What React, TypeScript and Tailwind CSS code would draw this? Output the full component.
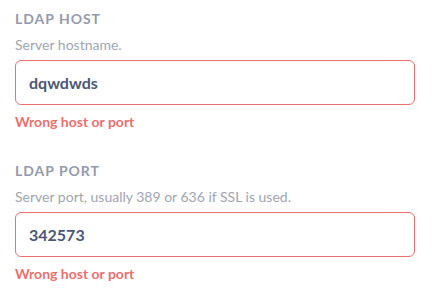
export default function App() {
  const fields = [
    { label: "LDAP HOST", desc: "Server hostname.", value: "dqwdwds" },
    {
      label: "LDAP PORT",
      desc: "Server port, usually 389 or 636 if SSL is used.",
      value: "342573",
    },
  ];
  return (
    <div className="w-[439px] h-[306px] bg-white px-[15px] pt-[10px] font-['Lato',sans-serif]">
      {fields.map((f) => (
        <div key={f.label} className="mb-[31px]">
          <p className="text-[14px] font-bold tracking-[0.07em] text-[#949aab] leading-[18px]">
            {f.label}
          </p>
          <p className="mt-[8px] text-[14px] text-[#a0a5b1] leading-[18px]">
            {f.desc}
          </p>
          <div className="mt-[6px] h-[45px] w-[400px] rounded-[6px] border border-[#ed6e6e] flex items-center px-[13px]">
            <span className="text-[16px] font-bold text-[#4c5773]">{f.value}</span>
          </div>
          <p className="mt-[8px] text-[14px] font-bold text-[#ed6e6e] leading-[18px]">
            Wrong host or port
          </p>
        </div>
      ))}
    </div>
  );
}
